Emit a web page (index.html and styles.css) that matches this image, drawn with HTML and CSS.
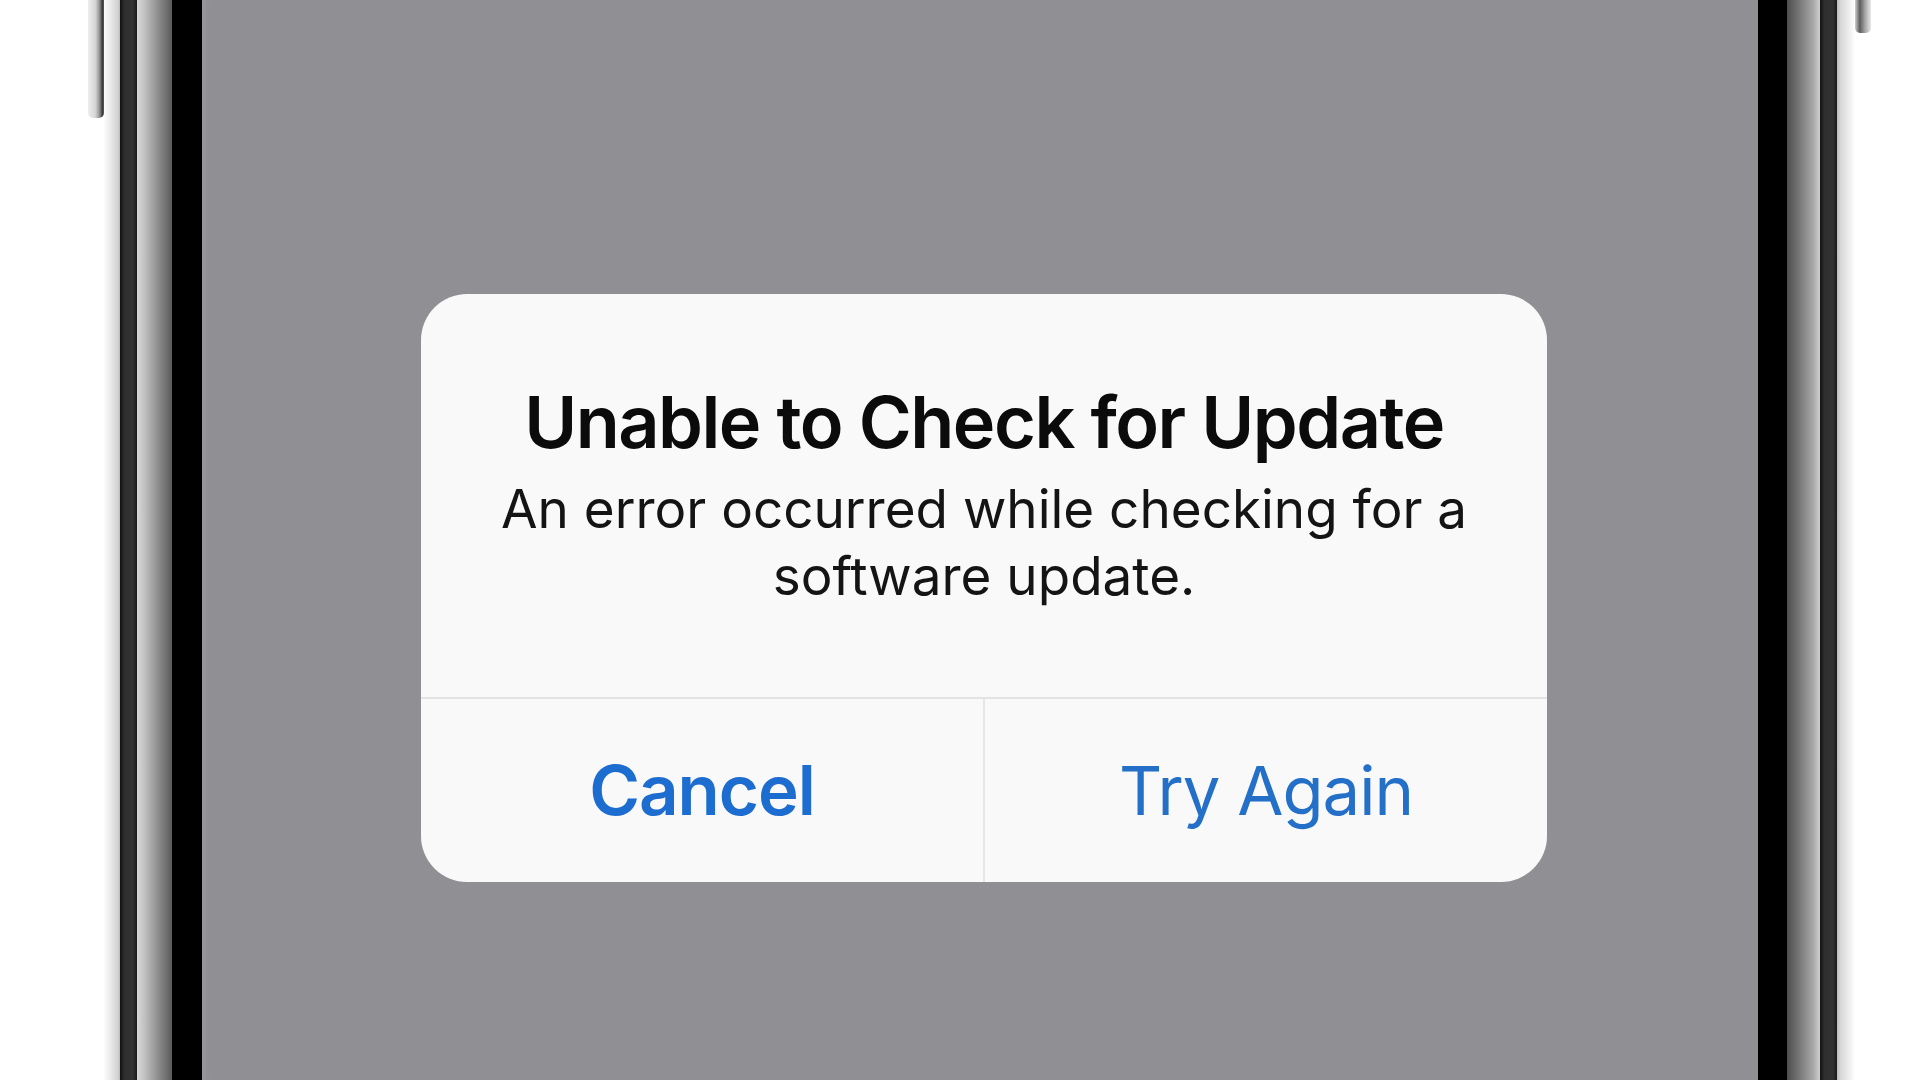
FILE: index.html
```html
<!DOCTYPE html>
<html lang="en">
<head>
<meta charset="utf-8">
<title>Software Update</title>
<link rel="stylesheet" href="styles.css">
</head>
<body>
  <div class="device">
    <div class="gutter gutter-left"><span class="side-button side-button-left"></span></div>
    <div class="bezel bezel-left">
      <span class="rim-light"></span>
      <span class="rim-dark"></span>
      <span class="band band-left"></span>
      <span class="glass-edge"></span>
    </div>

    <main class="screen">
      <section class="alert" role="alertdialog" aria-labelledby="alert-title">
        <div class="alert-body">
          <h1 class="alert-title" id="alert-title">Unable to Check for Update</h1>
          <p class="alert-message">An error occurred while checking for a<br>software update.</p>
        </div>
        <div class="alert-actions">
          <button class="alert-button alert-button-cancel">Cancel</button>
          <button class="alert-button alert-button-retry">Try Again</button>
        </div>
      </section>
    </main>

    <div class="bezel bezel-right">
      <span class="glass-edge"></span>
      <span class="band band-right"></span>
      <span class="rim-dark"></span>
      <span class="rim-light rim-light-right"></span>
    </div>
    <div class="gutter gutter-right"><span class="side-button side-button-right"></span></div>
  </div>
</body>
</html>
```
FILE: styles.css
```css
html, body {
  margin: 0;
  padding: 0;
  background: #ffffff;
}

body {
  width: 1920px;
  height: 1080px;
  overflow: hidden;
  font-family: Inter, "Noto Sans", "Liberation Sans", sans-serif;
}

.device {
  display: flex;
  height: 1080px;
}

/* white margins on either side of the phone, holding the hardware buttons */
.gutter {
  position: relative;
  background: #ffffff;
}

.gutter-left {
  width: 103px;
}

.gutter-right {
  flex: 1;
}

.side-button {
  position: absolute;
  top: 0;
  width: 16px;
  border-radius: 0 0 5px 5px;
}

.side-button-left {
  left: 88px;
  height: 118px;
  background: linear-gradient(90deg, #eeeeee 0%, #d6d6d6 45%, #9a9a9a 70%, #3a3a3a 90%, #5a5a5a 100%);
}

.side-button-right {
  left: 0;
  height: 33px;
  background: linear-gradient(90deg, #cfcfcf 0%, #5c5c5c 30%, #a0a0a0 60%, #e8e8e8 100%);
}

/* stainless frame and black border around the display */
.bezel {
  display: flex;
  height: 100%;
}

.bezel > span {
  display: block;
  height: 100%;
}

.rim-light {
  width: 17px;
  background: linear-gradient(90deg, #ffffff 0%, #ececec 40%, #d4d4d4 85%, #bdbdbd 100%);
}

.rim-light-right {
  width: 18px;
  background: linear-gradient(90deg, #bdbdbd 0%, #d8d8d8 20%, #efefef 70%, #ffffff 100%);
}

.rim-dark {
  width: 17px;
  background: linear-gradient(90deg, #111111 0%, #2e2e2e 25%, #333333 75%, #1a1a1a 100%);
}

.band {
  width: 35px;
}

.band-left {
  background: linear-gradient(90deg, #d9d9d9 0%, #bcbcbc 25%, #8e8e8e 60%, #5a5a5a 100%);
}

.band-right {
  width: 33px;
  background: linear-gradient(90deg, #4e4e4e 0%, #7a7a7a 40%, #a9a9a9 80%, #cfcfcf 100%);
}

.glass-edge {
  width: 30px;
  background: #000000;
}

.bezel-right .glass-edge {
  width: 29px;
}

/* dimmed display behind the alert */
.screen {
  width: 1556px;
  height: 100%;
  background: #8f8f94;
  box-shadow: inset 8px 0 6px -4px rgba(255, 255, 255, 0.08);
  display: flex;
  flex-direction: column;
  align-items: flex-start;
  padding: 294px 0 0 219px;
  box-sizing: border-box;
}

.alert {
  width: 1126px;
  background: #f9f9f9;
  border-radius: 46px;
  overflow: hidden;
  display: flex;
  flex-direction: column;
}

.alert-body {
  padding: 83px 40px 87px;
  text-align: center;
  color: #0b0b0b;
}

.alert-title {
  margin: 0;
  font-size: 72px;
  line-height: 90px;
  font-weight: 600;
  letter-spacing: -1.5px;
}

.alert-message {
  margin: 9px 0 0;
  font-size: 53px;
  line-height: 67px;
  font-weight: 400;
  letter-spacing: 0;
  color: #141414;
}

.alert-actions {
  display: flex;
  border-top: 2px solid #e3e3e4;
  height: 183px;
}

.alert-button {
  flex: 1;
  margin: 0;
  padding: 0;
  border: 0;
  background: transparent;
  font-family: inherit;
  line-height: 183px;
  color: #1d6dd0;
  cursor: pointer;
}

.alert-button-cancel {
  font-size: 69px;
  font-weight: 600;
  letter-spacing: -1px;
  border-right: 2px solid #e6e6e7;
}

.alert-button-retry {
  font-size: 67px;
  font-weight: 400;
  letter-spacing: -1px;
  color: #2470c8;
}
```
